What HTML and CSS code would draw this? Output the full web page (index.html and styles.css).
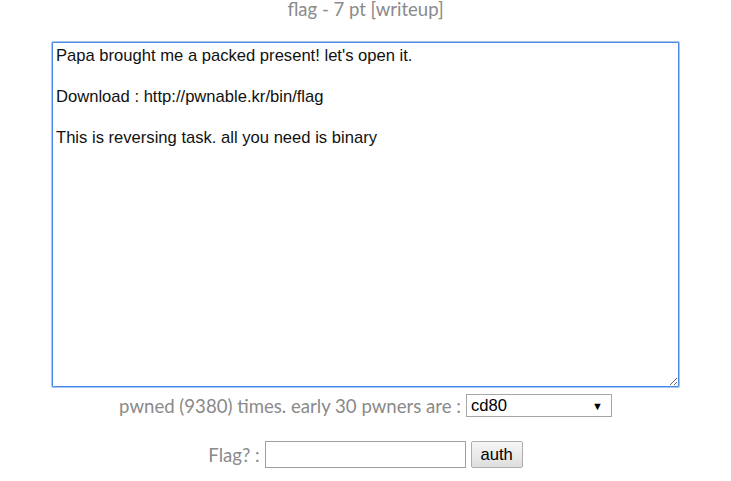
FILE: index.html
```html
<!DOCTYPE html>
<html>
<head>
<meta charset="utf-8">
<link rel="stylesheet" href="styles.css">
</head>
<body>
<div class="page">
  <div class="title">flag - 7 pt [writeup]</div>
  <textarea class="desc">Papa brought me a packed present! let's open it.

Download : http://pwnable.kr/bin/flag

This is reversing task. all you need is binary</textarea>
  <div class="row pwners">
    <span class="label">pwned (9380) times. early 30 pwners are :</span>
    <div class="select"><span>cd80</span><span class="arrow">▼</span></div>
  </div>
  <div class="row flagrow">
    <span class="label">Flag? :</span>
    <input class="flaginput" type="text">
    <button class="auth">auth</button>
  </div>
</div>
</body>
</html>
```
FILE: styles.css
```css
html, body {
  margin: 0;
  padding: 0;
  background: #ffffff;
}
.page {
  display: flex;
  flex-direction: column;
  align-items: center;
  width: 731px;
}
.title {
  font-family: Lato, "Open Sans", sans-serif;
  font-size: 18.5px;
  line-height: 18px;
  color: #8a8a8a;
  margin-top: 0;
}
.desc {
  box-sizing: border-box;
  width: 627px;
  height: 345px;
  margin: 24px 0 0 0;
  padding: 3px 3px;
  font-family: "Liberation Sans", Arial, sans-serif;
  font-size: 16.6px;
  line-height: 20.5px;
  color: #111;
  border: 1px solid #4a88e8;
  box-shadow: 0 0 0 1px #a9c5f2;
  border-radius: 1px;
  outline: none;
  resize: both;
}
.row {
  display: flex;
  align-items: center;
  gap: 5px;
}
.label {
  font-family: Lato, "Open Sans", sans-serif;
  font-size: 18.6px;
  color: #8a8a8a;
}
.pwners {
  margin-top: 7px;
  height: 23px;
}
.select {
  box-sizing: border-box;
  width: 146px;
  height: 23px;
  border: 1px solid #a6a6a6;
  display: flex;
  align-items: center;
  justify-content: space-between;
  padding: 0 8px 0 4px;
  font-family: "Liberation Sans", Arial, sans-serif;
  font-size: 16.6px;
  color: #000;
}
.arrow {
  font-size: 11px;
}
.flagrow {
  margin-top: 24px;
}
.flaginput {
  box-sizing: border-box;
  width: 201px;
  height: 27px;
  margin: 0;
  border: 1px solid #a0a0a0;
  padding: 2px 4px;
  font-size: 16px;
}
.auth {
  box-sizing: border-box;
  width: 52px;
  height: 27px;
  margin: 0;
  padding: 0;
  font-family: "Liberation Sans", Arial, sans-serif;
  font-size: 16.6px;
  color: #000;
  border: 1px solid #adadad;
  border-radius: 2px;
  background: linear-gradient(#f6f6f6, #dedede);
}
```
